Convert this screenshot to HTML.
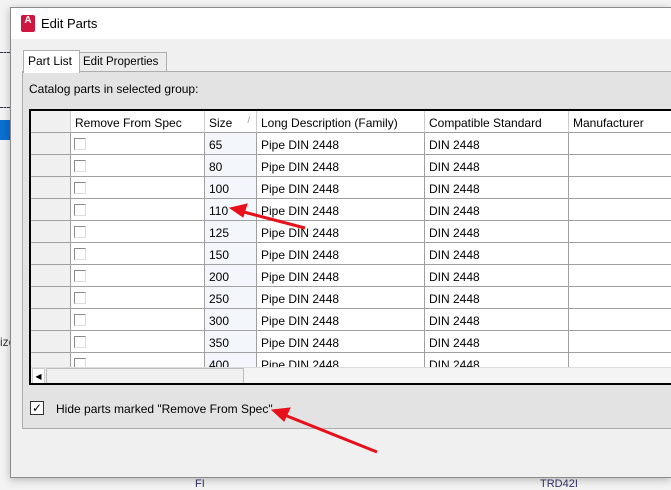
<!DOCTYPE html>
<html><head><meta charset="utf-8"><style>
*{box-sizing:border-box;margin:0;padding:0}
body{width:671px;height:485px;overflow:hidden;background:#f3f3f3;font-family:"Liberation Sans",sans-serif;font-size:12px;color:#000;position:relative}
.abs{position:absolute}
.dlg{left:10px;top:7px;width:661px;height:471px;background:#f0f0f0;border:1px solid #8a8a8a;border-right:none;box-shadow:0 2px 8px rgba(0,0,0,.25)}
.title{left:0;top:0;width:661px;height:31px;background:#fff}
.tab{height:21px;border:1px solid #adadad;border-bottom:none;padding:3px 4px;font-size:12px;white-space:nowrap}
.panel{left:11px;top:63px;width:650px;height:358px;background:#e3e3e3;border:1px solid #adadad;border-right:none}
.grid{left:29px;top:109px;width:642px;height:276px;border:2px solid #000;border-right:none;background:#fff;overflow:hidden}
.cell{position:absolute;height:22px;border-right:1px solid #a0a0a0;border-bottom:1px solid #a0a0a0;padding:5px 4px 0;white-space:nowrap;overflow:hidden}
.cb{position:absolute;width:12px;height:12px;border:1px solid #8a8a8a;border-right-color:#ddd;border-bottom-color:#ddd;background:#fff}
</style></head><body>
<div class="abs" style="left:0;top:120px;width:10px;height:20px;background:#0a6fd0"></div>
<div class="abs" style="left:0;top:52px;width:10px;border-top:1px dashed #335"></div>
<div class="abs" style="left:0;top:107px;width:10px;border-top:1px dashed #335"></div>
<div class="abs" style="left:0;top:335px;font-size:12px;color:#333">ize</div>
<div class="abs" style="left:195px;top:478px;font-size:11px;color:#336">FI</div>
<div class="abs" style="left:540px;top:478px;font-size:11px;color:#336">TRD42I</div>

<div class="abs dlg">
 <div class="abs title">
  <div class="abs" style="left:10px;top:7px;width:14px;height:17px;background:#d01640;border-radius:2px;color:#fff;font-size:10px;font-weight:bold;text-align:center;line-height:12px">A</div>
  <div class="abs" style="left:30px;top:8px;font-size:13px">Edit Parts</div>
 </div>
 <div class="abs tab" style="left:12px;top:42px;width:57px;height:23px;background:#fff;z-index:2;border-color:#adadad">Part List</div>
 <div class="abs tab" style="left:68px;top:44px;width:88px;background:#ececec;font-size:11.5px;padding:3px 3px">Edit Properties</div>
 <div class="abs panel"></div>
 <div class="abs" style="left:18px;top:74px;font-size:12px">Catalog parts in selected group:</div>
 <div class="abs" style="left:19px;top:393px;width:14px;height:14px;border:1px solid #333;background:#fff;font-size:12px;line-height:12px;text-align:center">✓</div>
 <div class="abs" style="left:45px;top:394px;font-size:12px">Hide parts marked "Remove From Spec"</div>
</div>

<div class="abs grid" id="g"></div>
<script>
var g=document.getElementById('g');
var cols=[[0,40],[40,134],[174,52],[226,168],[394,144],[538,120]];
var hdr=['','Remove From Spec','Size','Long Description (Family)','Compatible Standard','Manufacturer'];
var h='';
cols.forEach(function(c,i){h+='<div class="cell" style="left:'+c[0]+'px;top:0;width:'+c[1]+'px;background:'+(i==0?'#f0f0f0':'#fff')+';border-right-color:#ccc">'+hdr[i]+(i==2?'<span style="position:absolute;right:6px;top:4px;color:#999;font-size:9px">/</span>':'')+'</div>';});
var sz=[65,80,100,110,125,150,200,250,300,350,400];
sz.forEach(function(s,r){var t=22+r*22;
 h+='<div class="cell" style="left:0;top:'+t+'px;width:40px;background:#f0f0f0"></div>';
 h+='<div class="cell" style="left:40px;top:'+t+'px;width:134px"><div class="cb" style="left:3px;top:5px"></div></div>';
 h+='<div class="cell" style="left:174px;top:'+t+'px;width:52px;background:#f3f6fb">'+s+'</div>';
 h+='<div class="cell" style="left:226px;top:'+t+'px;width:168px">Pipe DIN 2448</div>';
 h+='<div class="cell" style="left:394px;top:'+t+'px;width:144px">DIN 2448</div>';
 h+='<div class="cell" style="left:538px;top:'+t+'px;width:120px"></div>';});
h+='<div style="position:absolute;left:0;top:256px;width:642px;height:18px;background:#f4f4f4;border-top:1px solid #ddd"></div>';
h+='<div style="position:absolute;left:1px;top:257px;width:13px;height:16px;background:#fff;border:1px solid #ccc;font-size:8px;text-align:center;line-height:15px">◀</div>';
h+='<div style="position:absolute;left:15px;top:257px;width:198px;height:16px;background:#f0f0f0;border:1px solid #bbb"></div>';
g.innerHTML=h;
</script>
<svg class="abs" style="left:0;top:0" width="671" height="485">
<g stroke="#e8101a" stroke-width="3" fill="#e8101a">
<line x1="305" y1="228" x2="240" y2="211"/>
<polygon points="230,208 247,204 243,217" stroke-width="1"/>
<line x1="377" y1="452" x2="282" y2="414"/>
<polygon points="272,410 290,408 284,421" stroke-width="1"/>
</g></svg>
</body></html>
